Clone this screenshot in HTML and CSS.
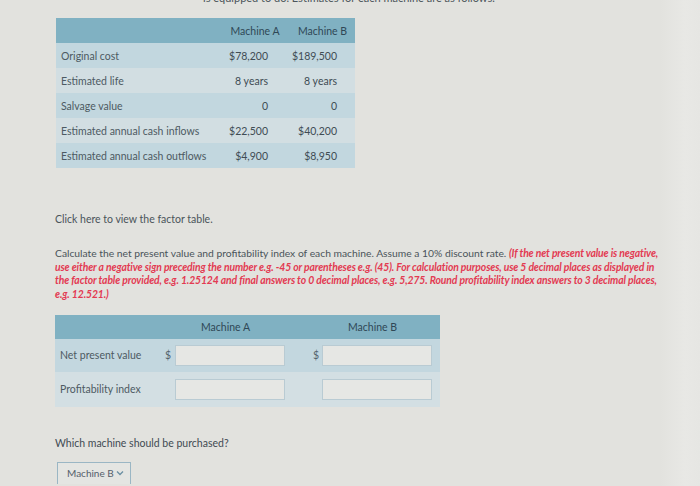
FILE: index.html
```html
<!DOCTYPE html>
<html>
<head>
<meta charset="utf-8">
<link rel="stylesheet" href="styles.css">
</head>
<body>
<div class="page">
  <p class="cut">is equipped to do. Estimates for each machine are as follows.</p>
  <table class="data">
    <thead>
      <tr><th class="lbl"></th><th>Machine A</th><th>Machine B</th></tr>
    </thead>
    <tbody>
      <tr class="r1"><td class="lbl">Original cost</td><td class="va">$78,200</td><td class="vb">$189,500</td></tr>
      <tr class="r2"><td class="lbl">Estimated life</td><td class="va">8 years</td><td class="vb">8 years</td></tr>
      <tr class="r1"><td class="lbl">Salvage value</td><td class="va">0</td><td class="vb">0</td></tr>
      <tr class="r2"><td class="lbl">Estimated annual cash inflows</td><td class="va">$22,500</td><td class="vb">$40,200</td></tr>
      <tr class="r1"><td class="lbl">Estimated annual cash outflows</td><td class="va">$4,900</td><td class="vb">$8,950</td></tr>
    </tbody>
  </table>

  <p class="link">Click here to view the factor table.</p>

  <p class="question">Calculate the net present value and profitability index of each machine. Assume a 10% discount rate. <span class="hint">(If the net present value is negative,<br>use either a negative sign preceding the number e.g. -45 or parentheses e.g. (45). For calculation purposes, use 5 decimal places as displayed in<br>the factor table provided, e.g. 1.25124 and final answers to 0 decimal places, e.g. 5,275. Round profitability index answers to 3 decimal places,<br>e.g. 12.521.)</span></p>

  <table class="answer">
    <colgroup>
      <col class="c-lbl"><col class="c-cura"><col class="c-inpa"><col class="c-curb"><col class="c-inpb">
    </colgroup>
    <thead>
      <tr><th></th><th colspan="2" class="ha">Machine A</th><th colspan="2" class="hb">Machine B</th></tr>
    </thead>
    <tbody>
      <tr class="a1"><td class="alb">Net present value</td><td class="cur ca">$</td><td><div class="box"></div></td><td class="cur cb">$</td><td><div class="box"></div></td></tr>
      <tr class="a2"><td class="alb">Profitability index</td><td></td><td><div class="box"></div></td><td></td><td><div class="box"></div></td></tr>
    </tbody>
  </table>

  <p class="which">Which machine should be purchased?</p>
  <div class="select"><span>Machine B</span><svg class="chev" width="8" height="6" viewBox="0 0 8 6"><path d="M1 1.5 L4 4.5 L7 1.5" fill="none" stroke="#6a8fa3" stroke-width="1.3"/></svg></div>
</div>
</body>
</html>
```
FILE: styles.css
```css
html, body {
  margin: 0;
  padding: 0;
  background: #e2e2de;
}
body {
  font-family: Lato, "Open Sans", sans-serif;
  color: #404c54;
  width: 700px;
  height: 486px;
  overflow: hidden;
  background: linear-gradient(90deg, #e2e2de 0, #e2e2de 660px, #e8e8e5 685px, #e6e6e3 700px);
}
.page {
  padding-left: 55px;
}
.cut {
  margin: -9px 0 0 148px;
  font-size: 11px;
  line-height: 14px;
  height: 14px;
  color: #4a545a;
  white-space: nowrap;
}
table {
  border-collapse: collapse;
  border-spacing: 0;
}
.data {
  margin-top: 13px;
  margin-left: 1px;
  width: 299px;
  font-size: 10.5px;
}
.data th {
  background: #80b1c2;
  height: 25px;
  padding: 0;
  font-weight: normal;
  color: #2f4856;
  text-align: center;
}
.data th.lbl { width: 164px; }
.data td {
  height: 25px;
  padding: 0;
}
.data .r1 td { background: #c2d7df; }
.data .r2 td { background: #d2dee2; }
.data td.lbl { padding-left: 5px; color: #4d5a62; }
.data td.va { text-align: right; padding-right: 22px; width: 48px; }
.data td.vb { text-align: right; padding-right: 18px; width: 47px; }

.link {
  margin: 44px 0 0 0;
  font-size: 10.5px;
  line-height: 14px;
  color: #4a545a;
}
.question {
  margin: 21px 0 0 0;
  font-size: 10.3px;
  line-height: 13.7px;
  color: #4a545a;
  white-space: nowrap;
}
.hint {
  color: #e33a52;
  font-weight: bold;
  font-style: italic;
  font-size: 10.4px;
  letter-spacing: -0.13px;
}
.answer {
  margin-top: 13px;
  width: 385px;
  table-layout: fixed;
  font-size: 10.5px;
}
.c-lbl { width: 105px; }
.c-cura { width: 15px; }
.c-inpa { width: 130px; }
.c-curb { width: 17px; }
.c-inpb { width: 118px; }
.answer th {
  background: #80b1c2;
  height: 24px;
  padding: 0;
  font-weight: normal;
  color: #2f4856;
  text-align: center;
}
.answer th.ha { padding-right: 14px; }
.answer td { padding: 0; }
.answer .alb { padding-left: 5px; text-align: left; color: #4d5a62; }
.answer .cur { color: #55626b; }
.answer .ca { padding-left: 5px; }
.answer .cb { padding-left: 8px; }
.answer .a1 td { background: #c3d7df; height: 33px; }
.answer .a2 td { background: #d3dfe3; height: 35px; }
.box {
  width: 108px;
  height: 19px;
  background: #e6e7e4;
  border: 1px solid #b9cbd3;
}
.which {
  margin: 29px 0 0 0;
  font-size: 10.5px;
  line-height: 14px;
  color: #3f4a52;
}
.select {
  margin: 12px 0 0 2px;
  width: 74px;
  height: 22px;
  border: 1px solid #9ab6c4;
  border-bottom: none;
  display: flex;
  align-items: center;
  justify-content: space-between;
  padding: 0 6px 0 9px;
  box-sizing: border-box;
  font-size: 10px;
  color: #55606a;
  background: #e4e5e2;
}
.chev { display: block; }
```
